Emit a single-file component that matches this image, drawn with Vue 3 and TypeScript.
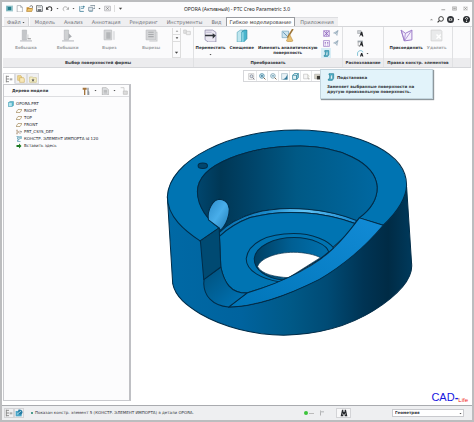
<script setup lang="ts">
import { h, ref } from 'vue'

type Shape = [d: string, fill: string, stroke?: string, width?: number]

// Every glyph is drawn on a 12 x 12 grid.
const glyphs: Record<string, Shape[]> = {
  app: [['M0 1h12v10H0z', '#9fc9cf'], ['M3 3h6v6H3z', '#237f8c'], ['M1 2h2v8H1z', '#5fa5b0']],
  page: [['M2 1h6l3 3v8H2z', '#fff', '#8a8f96'], ['M8 1v3h3', 'none', '#8a8f96']],
  open: [['M1 4h4l1 1h4v6H1z', '#c98a2c'], ['M3 6h9l-2 5H1z', '#efc46a', '#94651d', 0.6], ['M6 3l3-2 2 1v3', 'none', '#4b4b4b', 1.2]],
  save: [['M1 1h9l1 1v9H1z', '#fafafa', '#4e5358', 1.3], ['M3 1h6v4H3z', '#c5c9cd'], ['M3 7h6v4H3z', '#6b7076']],
  undo: [['M2 6c2-4 8-4 8 1 0 2-1 3-2 3', 'none', '#333', 1.8], ['M0 3v5h5z', '#333']],
  redo: [['M10 6C8 2 2 2 2 7c0 2 1 3 2 3', 'none', '#aaa', 1.6], ['M12 3v5H7z', '#aaa']],
  regen: [['M3 2v9h7', 'none', '#3f7f9b', 1.4], ['M5 3h5M5 6h5', 'none', '#5a93aa', 1.3], ['M9 1l3 2-3 2z', '#2c7391']],
  windows: [['M1 4h7v6H1z', '#dfe8ee', '#5d7281'], ['M4 1h8v5H9', 'none', '#5d7281', 1.2], ['M2 11h6', 'none', '#4a88a0']],
  close: [['M1 2h10v8H1z', '#ececee', '#a0a0a5'], ['M4 4l4 4M8 4L4 8', 'none', '#777', 1.2]],
  caret: [['M2 4h8L6 9z', '#444']],
  up: [['M2 8h8L6 4z', '#999']],
  min: [['M1 9h9', 'none', '#777', 1.6]],
  max: [['M1 2h10v8H1z', '#eee', '#999', 1.4], ['M3 4h6v4H3z', '#aaa']],
  cross: [['M1 2h10v8H1z', '#eee', '#bbb'], ['M3 3l6 6M9 3L3 9', 'none', '#888', 1.6]],
  search: [['M7 1a4 4 0 1 1 0 8 4 4 0 0 1 0-8z', '#fff', '#333', 1.6], ['M4 8l-3 3', 'none', '#333', 2]],
  person: [['M6 0a6 6 0 1 1 0 12A6 6 0 0 1 6 0z', '#303338'], ['M3 4h6v4H3z', '#d9d9d9'], ['M5 5h2v2H5z', '#444']],
  help: [['M6 0a6 6 0 1 1 0 12A6 6 0 0 1 6 0z', '#272a2e'], ['M4 5c0-3 4-3 4-1 0 2-2 1-2 3', 'none', '#fff', 1.3], ['M5 8h2v2H5z', '#fff']],
  boss: [['M3 1h4v9H3z', '#c4c6c9', '#adb0b4', 0.5], ['M7 5h2v4H7z', '#dfe0e2'], ['M1 11h11', 'none', '#a8abb0', 0.8], ['M8 9h3', 'none', '#999', 1]],
  boss2: [['M3 1h4v9H3z', '#cfd1d3', '#adb0b4', 0.5], ['M7 4l3 3-3 2z', '#aaadb1'], ['M1 11h11', 'none', '#a8abb0', 0.8]],
  cut: [['M1 1h7v9H1z', '#d4d5d7', '#b8babd', 0.6], ['M3 3h4v6H3z', '#b4b6b9'], ['M9 2h2v8H9z', '#e2e3e5']],
  cuts: [['M1 1h9v9H1z', '#d4d5d7', '#b8babd', 0.6], ['M3 3h5M3 5h5M3 7h5', 'none', '#a8aaad', 1], ['M10 3h1v8H4', 'none', '#c6c8ca', 1]],
  copyoff: [['M1 3h4v5H1z', '#e6e6e6', '#c6c6c6'], ['M5 5h6v5H5z', '#eee', '#c6c6c6']],
  move: [['M2 1h6l3 2v9H4L1 10V1z', '#ebe8f2', '#8a84a5', 0.7], ['M1 6h8', 'none', '#30333a', 1.4], ['M8 4l3 2-3 3z', '#30333a'], ['M2 3h5', 'none', '#b0abc8', 0.7]],
  offset: [['M2 3l3-2h2v9l-2 2H2z', '#bfe6ef', '#58a7bb', 0.6], ['M6 3l2-2h3v8l-3 3H6z', '#49b5cd', '#25839b', 0.6], ['M6 3h2v9H6z', '#86d2e2']],
  analytic: [['M1 2h6v6H1z', '#cfe4ee', '#6b9db8', 0.6], ['M2 3l4 4', 'none', '#5189aa', 0.8], ['M11 0L6 8', 'none', '#9c7437', 1.5], ['M8 5l3 6c-1 1-5 1-6 0z', '#e8c072', '#b38535', 0.5]],
  pattern: [['M1 1h10v10H1z', '#e6dcf3', '#a584cc', 1.2], ['M2 2l8 8M10 2l-8 8', 'none', '#8258b3', 1.2], ['M6 1v10', 'none', '#8258b3', 0.7]],
  dots: [['M1 1h10v10H1z', '#f8f4fd', '#9b78c5', 1.2], ['M3 4h2v2H3zM7 4h2v2H7zM3 8h2v1H3zM7 8h2v1H7z', '#8258b3']],
  mirror: [['M1 6l9-5-2 10-3-4z', '#c7d3dc', '#7996a8', 0.8], ['M5 7l5-6', 'none', '#68899d', 1]],
  replace: [['M3 1h7v7l-2 3H2V9h2V3H3z', '#56b8ce', '#1d7893', 1], ['M6 3h2v6H5z', '#fff', '#2b89a3', 0.7]],
  recog: [['M1 1h6v5H1z', '#ccd0d4', '#91959a', 0.8], ['M4 11l3-8h2l2 8H9L8 9H6l-1 2z', '#26282c']],
  recog2: [['M1 1h9v3H1z', '#9da6ad'], ['M2 3v7h4', 'none', '#888', 1], ['M4 11l3-8h2l2 8H9L8 9H6l-1 2z', '#26282c']],
  recog3: [['M1 10V5c1-5 9-5 9-1', 'none', '#5cb2cb', 1.3], ['M5 11l2-6h2l2 6H9L8 9 7 11z', '#26282c']],
  attach: [['M1 1l4 3 6-3v9l-7 1z', '#f4eefc', '#9c7bc9', 0.9], ['M1 1l3 10M5 4l-1 7M4 11l7-10', 'none', '#9c7bc9', 0.7]],
  remove: [['M1 1h9l1 1v9H1z', '#e9eaeb', '#d2d2d2', 0.7], ['M6 5l4 4M10 5L6 9', 'none', '#fff', 1.4]],
  tree: [['M2 1v10M2 2h4M2 6h4M2 10h4', 'none', '#777', 1.2], ['M7 5h4v3H7z', '#aaa']],
  folders: [['M1 1h5l1 2v5H1z', '#f4dc92', '#c6a24d', 0.8], ['M4 4h6l1 2v5H4z', '#f8e9ba', '#c6a24d', 0.8]],
  star: [['M1 3h4l1 1h5v7H1z', '#f7f0c9', '#c1b268', 0.8], ['M6 5l1 2h2L7 8l1 2-2-1-2 1 1-2-2-1h2z', '#555']],
  tools: [['M1 1h6v3H5v8H3V4H1z', '#a4743d'], ['M8 1h2v5l1 1v5H8z', '#8f979e']],
  doc: [['M2 1h6l3 3v8H2z', '#e1e3e5', '#999', 0.8], ['M4 5h5M4 7h5M4 9h5', 'none', '#999', 0.9]],
  treeoff: [['M1 1h5v6', 'none', '#bbb', 1], ['M5 6h6v5H5z', '#ddd', '#bbb']],
  part: [['M1 3l3-2h7v8l-3 2H1z', '#5bbdd2', '#257f97', 0.8], ['M1 3h7v8H1z', '#b6e5ee', '#3995ad', 0.6]],
  plane: [['M4 3h8L8 9H0z', '#fffdf6', '#90713c', 1.1]],
  csys: [['M2 1v10M1 2l8 8M1 10l7-7', 'none', '#8f6b42', 1], ['M8 5h4M10 4v4', 'none', '#555', 0.8]],
  imp: [['M1 1h4v2H3v3h3v2H3v3h6', 'none', '#3b8ba8', 1.2], ['M7 1h4v4H7z', '#8bc6d7', '#36849f', 0.7]],
  insert: [['M1 4h5V1l5 5-5 5V8H1z', '#1c7a22']],
  refit: [['M1 1h9v10H1z', '#f5f5f5', '#aaa', 0.8], ['M6 3a2 2 0 1 1 0 5 2 2 0 0 1 0-5z', '#dce8ef', '#667', 1], ['M8 8l3 3', 'none', '#667', 1.3]],
  zoomin: [['M5 1a4 4 0 1 1 0 8 4 4 0 0 1 0-8z', '#d9eef5', '#3a7f9c', 1.2], ['M8 8l3 3', 'none', '#765a41', 1.6], ['M3 5h4M5 3v4', 'none', '#22698a', 1.3]],
  zoomout: [['M5 1a4 4 0 1 1 0 8 4 4 0 0 1 0-8z', '#eaf4f8', '#6b96a9', 1.2], ['M8 8l3 3', 'none', '#765a41', 1.6], ['M3 5h4', 'none', '#22698a', 1.3]],
  repaint: [['M1 1h10v10H1z', '#e8f2f6', '#7b9cac', 0.8], ['M11 2v9H3c4-1 6-4 8-9z', '#33799a']],
  cube: [['M1 4h7v7H1z', '#e0f2f6', '#267b95', 1.2], ['M1 4l3-3h7v7l-3 3V4l3-3', '#8ecbda', '#267b95', 1.1]],
  saved: [['M1 2h7v8H1z', '#f6f6f6', '#aaa', 0.8], ['M8 3c3 1 3 4 0 6', 'none', '#bba', 1], ['M9 10h2', 'none', '#555', 1.2]],
  viewmgr: [['M1 2h9v8H1z', '#d8d4c8', '#999', 0.8], ['M5 5h6v6H5z', '#3e3c38']],
  world: [['M1 3h9v8H1z', '#4ba5c7'], ['M5 1c5-1 8 3 5 7-3 2-6 0-5-7z', '#267da4'], ['M3 8l6-5', 'none', '#d8f1f6', 1.1]],
  flag: [['M3 1v10', 'none', '#777', 1], ['M3 2h7v3H3z', '#c5c7c9']],
  find: [['M3 1h2v3h2V1h2l2 10H7V8H5v3H1z', '#292c30'], ['M3 6h1v3H3zM8 6h1v3H8z', '#999']],
}

const Glyph = (props: { name: string; size?: number }) =>
  h(
    'svg',
    { viewBox: '0 0 12 12', width: props.size ?? 7, height: props.size ?? 7, 'aria-hidden': 'true' },
    glyphs[props.name].map(([d, fill, stroke, width]) =>
      h('path', { d, fill, stroke: stroke ?? 'none', 'stroke-width': width ?? 1 }),
    ),
  )
Glyph.props = ['name', 'size']

const quick = ['page', 'open', 'save', 'undo', '-', 'redo', '-', 'regen', 'windows', '-', 'close']
const tabs = ['Модель', 'Анализ', 'Аннотация', 'Рендеринг', 'Инструменты', 'Вид', 'Гибкое моделирование', 'Приложения']
const activeTab = ref('Гибкое моделирование')
const shapes = [
  { icon: 'boss', label: 'Бобышка' },
  { icon: 'boss2', label: 'Бобышки' },
  { icon: 'cut', label: 'Вырез' },
  { icon: 'cuts', label: 'Вырезы' },
]
const tree = [
  { icon: 'plane', label: 'RIGHT' },
  { icon: 'plane', label: 'TOP' },
  { icon: 'plane', label: 'FRONT' },
  { icon: 'csys', label: 'PRT_CSYS_DEF' },
  { icon: 'imp', label: 'КОНСТР. ЭЛЕМЕНТ ИМПОРТА id 120' },
  { icon: 'insert', label: 'Вставить здесь' },
]
const viewTools = ['refit', 'zoomin', 'zoomout', 'repaint', 'cube', 'saved', 'viewmgr']
const filter = ref('Геометрия')
</script>

<template>
  <div class="window">
    <header class="titlebar">
      <div class="quick">
        <Glyph name="app" />
        <template v-for="(q, i) in quick" :key="i">
          <Glyph v-if="q === '-'" name="caret" :size="3" />
          <button v-else type="button"><Glyph :name="q" /></button>
        </template>
        <span class="rule"></span>
        <button type="button"><Glyph name="caret" :size="5" /></button>
      </div>
      <h1>OPORA (Активный) - PTC Creo Parametric 3.0</h1>
      <div class="controls">
        <button type="button"><Glyph name="min" :size="5" /></button>
        <button type="button"><Glyph name="max" :size="5" /></button>
        <button type="button"><Glyph name="cross" :size="5" /></button>
      </div>
    </header>

    <nav class="tabs">
      <button type="button" class="file">Файл<Glyph name="caret" :size="3" /></button>
      <button
        v-for="t in tabs"
        :key="t"
        type="button"
        :class="{ active: t === activeTab }"
        @click="activeTab = t"
      >{{ t }}</button>
      <div class="help">
        <Glyph name="up" :size="5" />
        <button type="button"><Glyph name="search" /></button>
        <button type="button"><Glyph name="person" /></button>
        <Glyph name="caret" :size="3" />
        <button type="button"><Glyph name="help" /></button>
      </div>
    </nav>

    <section class="ribbon">
      <div class="group">
        <div class="body gallery">
          <div class="shapes">
            <button v-for="s in shapes" :key="s.label" type="button" class="big off">
              <Glyph :name="s.icon" :size="13" />{{ s.label }}
            </button>
          </div>
          <div class="scroller">
            <button type="button"><Glyph name="up" :size="4" /></button>
            <button type="button"><Glyph name="caret" :size="4" /></button>
            <button type="button"><Glyph name="caret" :size="5" /></button>
          </div>
          <div class="side"><Glyph name="copyoff" :size="8" /></div>
        </div>
        <footer>Выбор поверхностей формы</footer>
      </div>
      <div class="group">
        <div class="body">
          <button type="button" class="big"><Glyph name="move" :size="13" />Переместить<Glyph name="caret" :size="3" /></button>
          <button type="button" class="big"><Glyph name="offset" :size="13" />Смещение</button>
          <button type="button" class="big"><Glyph name="analytic" :size="13" /><span>Изменить аналитическую<br />поверхность</span></button>
          <div class="pairs">
            <button type="button"><Glyph name="pattern" /></button>
            <button type="button"><Glyph name="mirror" :size="6" /></button>
            <button type="button"><Glyph name="dots" /></button>
            <button type="button"><Glyph name="mirror" :size="6" /></button>
            <button type="button" class="hot"><Glyph name="replace" /></button>
          </div>
        </div>
        <footer>Преобразовать</footer>
      </div>
      <div class="group">
        <div class="body stack">
          <button type="button"><Glyph name="recog" /></button>
          <span></span>
          <button type="button"><Glyph name="recog2" /></button>
          <span></span>
          <button type="button"><Glyph name="recog3" /></button>
          <Glyph name="caret" :size="3" />
        </div>
        <footer>Распознавание</footer>
      </div>
      <div class="group">
        <div class="body">
          <button type="button" class="big"><Glyph name="attach" :size="13" />Присоединить</button>
          <button type="button" class="big off"><Glyph name="remove" :size="13" />Удалить</button>
        </div>
        <footer>Правка констр. элементов</footer>
      </div>
      <div class="group">
        <div class="body"></div>
        <footer></footer>
      </div>
    </section>

    <main>
      <aside>
        <div class="panel-tabs">
          <button type="button" class="on"><Glyph name="tree" :size="8" /></button>
          <button type="button"><Glyph name="folders" :size="8" /></button>
          <button type="button"><Glyph name="star" :size="8" /></button>
        </div>
        <div class="panel">
          <div class="panel-head">
            <h2>Дерево модели</h2>
            <button type="button"><Glyph name="tools" :size="8" /></button>
            <Glyph name="caret" :size="3" />
            <button type="button"><Glyph name="doc" :size="8" /></button>
            <Glyph name="caret" :size="3" />
            <button type="button"><Glyph name="treeoff" :size="8" /></button>
          </div>
          <ul>
            <li class="root"><Glyph name="part" :size="6" />OPORA.PRT</li>
            <li v-for="n in tree" :key="n.label"><Glyph :name="n.icon" :size="6" />{{ n.label }}</li>
          </ul>
        </div>
      </aside>

      <section class="canvas">
        <div class="view-tools">
          <button v-for="v in viewTools" :key="v" type="button"><Glyph :name="v" :size="7" /></button>
        </div>
        <svg class="model" viewBox="498 384 741 627" role="img" aria-label="OPORA">
          <defs>
            <linearGradient id="body" gradientUnits="userSpaceOnUse" x1="504" y1="0" x2="1236" y2="0">
              <stop offset="0" stop-color="#0069a5" />
              <stop offset=".3" stop-color="#00639e" />
              <stop offset=".5" stop-color="#005987" />
              <stop offset=".65" stop-color="#004b75" />
              <stop offset=".8" stop-color="#003454" />
              <stop offset=".9" stop-color="#002b45" />
              <stop offset="1" stop-color="#003a5c" />
            </linearGradient>
            <linearGradient id="wall" gradientUnits="userSpaceOnUse" x1="592" y1="0" x2="1130" y2="0">
              <stop offset="0" stop-color="#00466e" />
              <stop offset=".13" stop-color="#003755" />
              <stop offset=".3" stop-color="#004469" />
              <stop offset=".55" stop-color="#005985" />
              <stop offset="1" stop-color="#0068a1" />
            </linearGradient>
            <linearGradient id="scoop" x1="0" y1="0" x2="1" y2="1">
              <stop offset="0" stop-color="#2a8ac8" />
              <stop offset=".5" stop-color="#49aeea" />
              <stop offset="1" stop-color="#1c77b0" />
            </linearGradient>
            <linearGradient id="rim" x1="0" y1="0" x2="1" y2="0">
              <stop offset="0" stop-color="#0870ad" />
              <stop offset=".35" stop-color="#1a8acb" />
              <stop offset=".62" stop-color="#62c4f7" />
              <stop offset="1" stop-color="#1688cf" />
            </linearGradient>
            <linearGradient id="bore" x1="0" y1="0" x2="1" y2="0">
              <stop offset="0" stop-color="#003f62" />
              <stop offset=".5" stop-color="#005f93" />
              <stop offset="1" stop-color="#0070ad" />
            </linearGradient>
            <linearGradient id="ramp" x1="0" y1="1" x2="1" y2="0">
              <stop offset="0" stop-color="#0075b8" />
              <stop offset="1" stop-color="#128bd6" />
            </linearGradient>
            <linearGradient id="fillet" x1="0" y1="0" x2="1" y2="1">
              <stop offset="0" stop-color="#00507b" />
              <stop offset="1" stop-color="#0076ba" />
            </linearGradient>
          </defs>
          <g stroke="#002c48" stroke-width="3" stroke-linejoin="round">
            <path fill="url(#body)" d="M502 590L518 850C526 890 560 915 600 940C665 978 760 1004 850 1004C990 1002 1080 955 1120 930C1190 885 1238 835 1233 790L1218 560L1148 675C1060 790 850 915 685 920L600 722Z" />
            <path fill="#0074b2" d="M600 722C555 692 502 650 502 590C506 480 690 390 890 390C1090 392 1218 465 1218 555C1216 605 1180 645 1148 675L1076 653C1110 628 1130 598 1130 562C1126 484 1010 438 900 438C750 438 592 490 592 575C596 622 625 660 657 683Z" />
            <path fill="url(#wall)" d="M657 683C625 660 592 622 592 575C592 490 750 438 900 438C1010 438 1126 484 1130 562C1130 598 1110 628 1076 653L1068 664C980 628 850 612 760 639C710 654 680 674 657 696Z" />
            <path fill="url(#scoop)" d="M625 659C620 628 640 597 658 597C685 599 690 624 686 641C682 662 672 680 661 690L657 683Z" />
            <path fill="url(#rim)" d="M657 697C680 674 710 654 760 639C860 612 985 628 1068 661L1064 670C970 635 850 625 750 652C710 667 680 688 658 708Z" />
            <path fill="#0074b2" d="M658 708C680 688 710 667 750 652C850 625 970 635 1064 670L1040 703L960 775L850 842L740 878C690 878 672 846 662 800Z" />
            <path fill="#0074b2" d="M840 845C785 836 738 812 738 775C744 728 800 700 880 700C935 700 985 720 1000 744L960 775Z" />
            <path fill="url(#bore)" d="M848 839C800 834 762 810 762 775C766 738 820 712 882 712C935 712 980 734 985 755L960 775Z" />
            <path fill="#fff" stroke-width="2" d="M865 832C825 830 785 822 772 799C780 773 830 756 880 756C912 756 944 763 960 772Z" />
            <path fill="url(#ramp)" d="M685 920L740 878C860 842 955 790 1000 743C1042 702 1064 668 1077 653L1148 675C1080 756 1020 800 957 837C860 886 762 918 685 920Z" />
            <path fill="url(#fillet)" d="M612 836L662 800C672 846 690 878 740 878L685 920C635 915 612 885 611 850Z" />
            <path fill="#004a72" d="M601 722L657 683L662 800L611 838Z" />
            <ellipse cx="608" cy="497" rx="14" ry="8" fill="#00466e" />
          </g>
        </svg>
        <p class="brand">CAD<b>-</b><small>Life</small></p>
        <div class="tooltip" role="tooltip">
          <strong><Glyph name="replace" :size="8" />Подстановка</strong>
          <p>Заменяет выбранные поверхности на<br />другую произвольную поверхность.</p>
        </div>
      </section>
    </main>

    <footer class="status">
      <button type="button"><Glyph name="tree" :size="8" /></button>
      <button type="button"><Glyph name="world" :size="8" /></button>
      <p><i></i>Показан констр. элемент 5 (КОНСТР. ЭЛЕМЕНТ ИМПОРТА) в детали OPORA.</p>
      <div class="signals">
        <span class="lamp"></span><span class="dash"></span>
        <Glyph name="flag" :size="6" />
        <button type="button" class="find"><Glyph name="find" :size="8" /></button>
      </div>
      <label>
        <select v-model="filter" aria-label="Фильтр выбора">
          <option>Геометрия</option>
        </select>
        <Glyph name="caret" :size="3" />
      </label>
    </footer>
  </div>
</template>

<style>
body {
  background: #fff;
}
</style>

<style scoped>
* {
  box-sizing: border-box;
}
.window {
  min-height: 100vh;
  display: flex;
  flex-direction: column;
  border: 2px solid #bcbdbf;
  background: #fff;
  color: #33363b;
  font: 5px/6px 'DejaVu Sans', Verdana, sans-serif;
}
button,
select {
  margin: 0;
  padding: 0;
  border: 0;
  background: none;
  color: inherit;
  font: inherit;
}
h1,
h2,
p,
ul {
  margin: 0;
  padding: 0;
  font-size: inherit;
}
button {
  display: flex;
  align-items: center;
  justify-content: center;
}
svg {
  display: block;
  flex: none;
}
.titlebar {
  display: grid;
  grid-template-columns: 1fr auto 1fr;
  align-items: center;
  height: 13px;
  padding: 0 4px;
  background: #fcfcfd;
}
.titlebar h1 {
  font: 5px/6px 'Noto Sans', sans-serif;
  color: #222;
}
.quick,
.controls {
  display: flex;
  align-items: center;
  gap: 3px;
}
.controls {
  justify-content: flex-end;
  gap: 6px;
}
.rule {
  width: 1px;
  height: 7px;
  background: #ddd;
}
.tabs {
  display: flex;
  align-items: flex-end;
  height: 12px;
  padding: 0 2px;
  background: #fcfcfd;
  border-bottom: 1px solid #d5d6d9;
  color: #6b6e74;
}
.tabs > button {
  height: 9px;
  padding: 0 4px 0 5px;
  background: #efeff1;
  border-top: 1px solid #dddee1;
}
.tabs > .file {
  gap: 1px;
  margin-right: 1px;
  padding: 0 3px;
  border-right: 1px solid #d5d6d9;
}
.tabs > .active {
  padding: 0 3px;
  background: #fff;
  border: 1px solid #999ba0;
  border-bottom: 0;
  color: #333;
}
.help {
  display: flex;
  align-items: center;
  gap: 3px;
  height: 100%;
  margin-left: auto;
  padding-bottom: 3px;
}
.ribbon {
  display: grid;
  grid-template-columns: minmax(0, 191fr) minmax(0, 149fr) minmax(0, 41fr) minmax(0, 69fr) minmax(0, 18fr);
  margin: 0 1px;
  border-bottom: 1px solid #d5d6d9;
  background: #fbfbfc;
}
.group {
  display: flex;
  flex-direction: column;
  border-right: 1px solid #e0e1e3;
}
.body {
  display: flex;
  justify-content: center;
  gap: 4px;
  height: 31px;
  padding-top: 1px;
}
.body.gallery {
  gap: 0;
  padding-left: 2px;
}
.group footer {
  height: 9px;
  background: #ececee;
  color: #33363b;
  font: bold 4px/9px 'DejaVu Sans', Verdana, sans-serif;
  text-align: center;
  white-space: nowrap;
}
.big {
  flex-direction: column;
  justify-content: flex-start;
  gap: 3px;
  padding-top: 1px;
  color: #2e3136;
  font-size: 4px;
  font-weight: bold;
  line-height: 5px;
  white-space: nowrap;
}
.big.off {
  color: #a3a5a8;
}
.shapes {
  flex: 1;
  display: grid;
  grid-template-columns: repeat(4, 1fr);
  border-right: 1px solid #ddd;
}
.scroller {
  display: grid;
  grid-template-rows: 7px 7px 1fr;
  width: 8px;
  border-right: 1px solid #ddd;
}
.scroller button {
  border-bottom: 1px solid #ddd;
}
.scroller button:last-child {
  align-items: flex-end;
  padding-bottom: 2px;
}
.side {
  width: 12px;
  padding-left: 2px;
}
.pairs {
  display: grid;
  grid-template-columns: 10px 9px;
  grid-auto-rows: 10px;
}
.pairs .hot {
  background: #d9eef6;
}
.stack {
  display: grid;
  grid-template-columns: 8px 4px;
  grid-auto-rows: 10px;
  align-items: center;
  gap: 0 1px;
}
main {
  flex: 1;
  display: flex;
}
aside {
  flex: 0 0 128px;
  display: flex;
  flex-direction: column;
  margin: 5px 0 4px 1px;
}
.panel-tabs {
  display: flex;
}
.panel-tabs button {
  width: 12px;
  height: 11px;
  border: 1px solid #dcdde0;
  background: #f0f0f1;
}
.panel-tabs .on {
  border-bottom-color: #fff;
  background: #fff;
}
.panel {
  flex: 1;
  border: 1px solid #c9cace;
  border-right: 2px solid #bfc0c4;
  background: #fcfcfd;
}
.panel-head {
  display: flex;
  align-items: center;
  gap: 4px;
  height: 12px;
  padding: 0 1px 0 8px;
  border-bottom: 1px solid #dddee1;
}
.panel-head h2 {
  flex: 1;
  font: bold 4px/6px 'DejaVu Sans', Verdana, sans-serif;
}
ul {
  padding: 3px 0 0 12px;
  list-style: none;
}
li {
  display: flex;
  align-items: center;
  gap: 2px;
  height: 7px;
  font-size: 4px;
  color: #22252a;
}
li.root {
  margin-left: -8px;
}
.canvas {
  flex: 1;
  position: relative;
  display: flex;
  flex-direction: column;
  padding: 2px 4px 0 35px;
}
.view-tools {
  display: flex;
  align-self: flex-start;
  margin-left: 77px;
  padding-left: 2px;
  border: 1px solid #d6d7da;
}
.view-tools button {
  width: 11px;
  height: 10px;
  border-right: 1px solid #e6e7e9;
}
.model {
  width: 82%;
  max-width: 720px;
  margin-top: 46px;
}
.brand {
  display: flex;
  align-items: flex-end;
  margin-top: auto;
  margin-left: auto;
  color: #1515e0;
  font: 11px/15px 'Liberation Sans', Arial, sans-serif;
}
.brand small {
  color: #f02020;
  font-size: 6px;
  line-height: 10px;
}
.tooltip {
  position: absolute;
  top: 1px;
  right: 39px;
  width: 113px;
  height: 30px;
  padding: 3px 6px;
  border: 1px solid #c3d5de;
  background: #e2f3fa;
  box-shadow: 1px 1px 1px #8e979c;
  font-size: 4px;
  font-weight: bold;
  line-height: 5px;
  white-space: nowrap;
}
.tooltip strong {
  display: flex;
  align-items: center;
  gap: 2px;
}
.tooltip p {
  margin-top: 3px;
}
.status {
  display: flex;
  align-items: center;
  height: 15px;
  padding: 0 8px 0 2px;
  border-top: 1px solid #a9abaf;
  background: #eeeff1;
}
.status > button {
  width: 10px;
  height: 10px;
  border: 1px solid #d3d4d7;
}
.status p {
  display: flex;
  align-items: center;
  gap: 2px;
  flex: 1;
  margin-left: 7px;
  font-size: 4px;
  white-space: nowrap;
}
.status i {
  width: 2px;
  height: 2px;
  border-radius: 50%;
  background: #16806b;
}
.signals {
  display: flex;
  align-items: center;
  padding-right: 41px;
}
.lamp {
  width: 4px;
  height: 4px;
  border-radius: 50%;
  background: #3cc43c;
}
.dash {
  width: 5px;
  height: 1px;
  margin: 0 5px 0 1px;
  background: #bbb;
}
.find {
  width: 15px;
  height: 10px;
  margin-left: 11px;
  border: 1px solid #d3d4d7;
  background: #f8f8f9;
}
.status label {
  display: flex;
  align-items: center;
  width: 72px;
  height: 8px;
  padding-right: 1px;
  border: 1px solid #c9cace;
  background: #fff;
}
.status select {
  flex: 1;
  padding-left: 2px;
  appearance: none;
  font-size: 4px;
  font-weight: bold;
}
</style>
